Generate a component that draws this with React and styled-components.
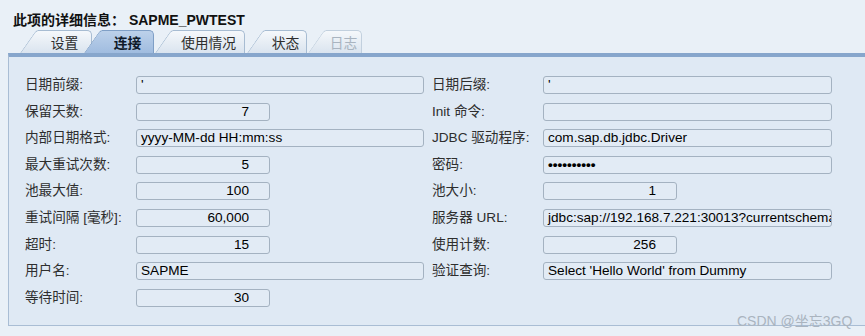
import React from "react";
import styled, { createGlobalStyle } from "styled-components";

const GlobalStyle = createGlobalStyle`
  html, body {
    margin: 0;
    padding: 0;
    background: #e9f0f7;
  }
  * { box-sizing: border-box; }
`;

const Page = styled.div`
  position: relative;
  width: 865px;
  height: 336px;
  overflow: hidden;
  background: #e9f0f7;
  font-family: "Liberation Sans", "Noto Sans CJK SC", sans-serif;
  color: #333;
`;

const Title = styled.div`
  padding: 12px 0 0 13px;
  height: 30px;
  line-height: 17px;
  font-size: 14px;
  font-weight: bold;
  color: #111;
  white-space: nowrap;
`;

const TabBar = styled.div`
  display: flex;
  height: 23px;
  padding-left: 20px;
`;

const Tab = styled.div`
  position: relative;
  z-index: ${p => (p.$active ? 3 : 1)};
  width: ${p => p.$w}px;
  height: 23px;
  margin-left: ${p => p.$ml}px;
  padding-left: 17px;
  display: flex;
  align-items: center;
  justify-content: center;
  font-size: 13.8px;
  font-weight: ${p => (p.$active ? "bold" : "normal")};
  color: ${p => (p.$disabled ? "#a9b4c0" : p.$active ? "#0f1a2a" : "#2e2e2e")};

  &::before,
  &::after {
    content: "";
    position: absolute;
    top: 0;
    bottom: 0;
    z-index: -1;
    background: ${p =>
      p.$active
        ? "linear-gradient(#bcd1ea, #a0bcdf)"
        : "linear-gradient(#f5f8fb, #dae4ef)"};
    border-color: ${p =>
      p.$active ? "#7f9fc6" : p.$disabled ? "#c2d0de" : "#a7bcd2"};
    border-style: solid;
    border-width: 0;
  }

  &::before {
    left: 0;
    width: 30px;
    transform: skewX(-35deg);
    transform-origin: bottom left;
    border-left-width: 1px;
    border-top-width: 1px;
    border-top-left-radius: 3px;
  }

  &::after {
    left: 18px;
    right: 0;
    border-top-width: 1px;
    border-right-width: 1px;
    border-top-right-radius: 5px;
  }
`;

const TabLabel = styled.span`
  position: relative;
`;

const Panel = styled.div`
  margin-left: 8px;
  height: 273px;
  background: #dfe9f4;
  border-top: 4px solid #87a6cc;
  border-left: 1px solid #a9bdd4;
  border-bottom: 1px solid #a9bdd4;
  padding: 19px 0 0 16px;
`;

const Grid = styled.div`
  display: grid;
  grid-template-columns: 111px 296px 111px 289px;
  grid-auto-rows: 18px;
  row-gap: 8.6px;
`;

const Label = styled.div`
  font-size: 13.6px;
  line-height: 18px;
  color: #2e2e2e;
  white-space: nowrap;
`;

const Field = styled.div`
  width: ${p => (p.$narrow ? "134px" : p.$right ? "289px" : "288px")};
  height: 18px;
  border: 1px solid #a4b2c1;
  border-radius: 3px;
  background: #e2ebf5;
  font-size: 13.6px;
  line-height: 16px;
  color: #000;
  white-space: nowrap;
  overflow: hidden;
  text-align: ${p => (p.$num ? "right" : "left")};
  padding: ${p => (p.$num ? "0 20px 0 0" : "0 0 0 4px")};
`;

const Dots = styled.span`
  font-weight: bold;
`;

const Watermark = styled.div`
  position: absolute;
  left: 737px;
  top: 310px;
  font-size: 14px;
  color: #aab4bf;
  white-space: nowrap;
`;

const tabs = [
  { label: "设置", w: 72, ml: 0 },
  { label: "连接", w: 70, ml: -8, active: true },
  { label: "使用情况", w: 90, ml: 1 },
  { label: "状态", w: 60, ml: 2 },
  { label: "日志", w: 54, ml: 1, disabled: true },
];

const rows = [
  [
    { label: "日期前缀:", value: "'" },
    { label: "日期后缀:", value: "'" },
  ],
  [
    { label: "保留天数:", value: "7", num: true },
    { label: "Init 命令:", value: "" },
  ],
  [
    { label: "内部日期格式:", value: "yyyy-MM-dd HH:mm:ss" },
    { label: "JDBC 驱动程序:", value: "com.sap.db.jdbc.Driver" },
  ],
  [
    { label: "最大重试次数:", value: "5", num: true },
    { label: "密码:", value: "••••••••••", password: true },
  ],
  [
    { label: "池最大值:", value: "100", num: true },
    { label: "池大小:", value: "1", num: true },
  ],
  [
    { label: "重试间隔 [毫秒]:", value: "60,000", num: true },
    { label: "服务器 URL:", value: "jdbc:sap://192.168.7.221:30013?currentschema=SAPME" },
  ],
  [
    { label: "超时:", value: "15", num: true },
    { label: "使用计数:", value: "256", num: true },
  ],
  [
    { label: "用户名:", value: "SAPME" },
    { label: "验证查询:", value: "Select 'Hello World' from Dummy" },
  ],
  [{ label: "等待时间:", value: "30", num: true }, null],
];

function Cell({ item, right }) {
  if (!item) return null;
  return (
    <>
      <Label>{item.label}</Label>
      <div>
        <Field $narrow={item.num} $num={item.num} $right={right}>
          {item.password ? <Dots>{item.value}</Dots> : item.value}
        </Field>
      </div>
    </>
  );
}

export default function App() {
  return (
    <Page>
      <GlobalStyle />
      <Title>此项的详细信息：&nbsp;SAPME_PWTEST</Title>
      <TabBar>
        {tabs.map(t => (
          <Tab
            key={t.label}
            $w={t.w}
            $ml={t.ml}
            $active={t.active}
            $disabled={t.disabled}
          >
            <TabLabel>{t.label}</TabLabel>
          </Tab>
        ))}
      </TabBar>
      <Panel>
        <Grid>
          {rows.map(([l, r], i) => (
            <React.Fragment key={i}>
              <Cell item={l} />
              <Cell item={r} right />
            </React.Fragment>
          ))}
        </Grid>
      </Panel>
      <Watermark>CSDN @坐忘3GQ</Watermark>
    </Page>
  );
}
